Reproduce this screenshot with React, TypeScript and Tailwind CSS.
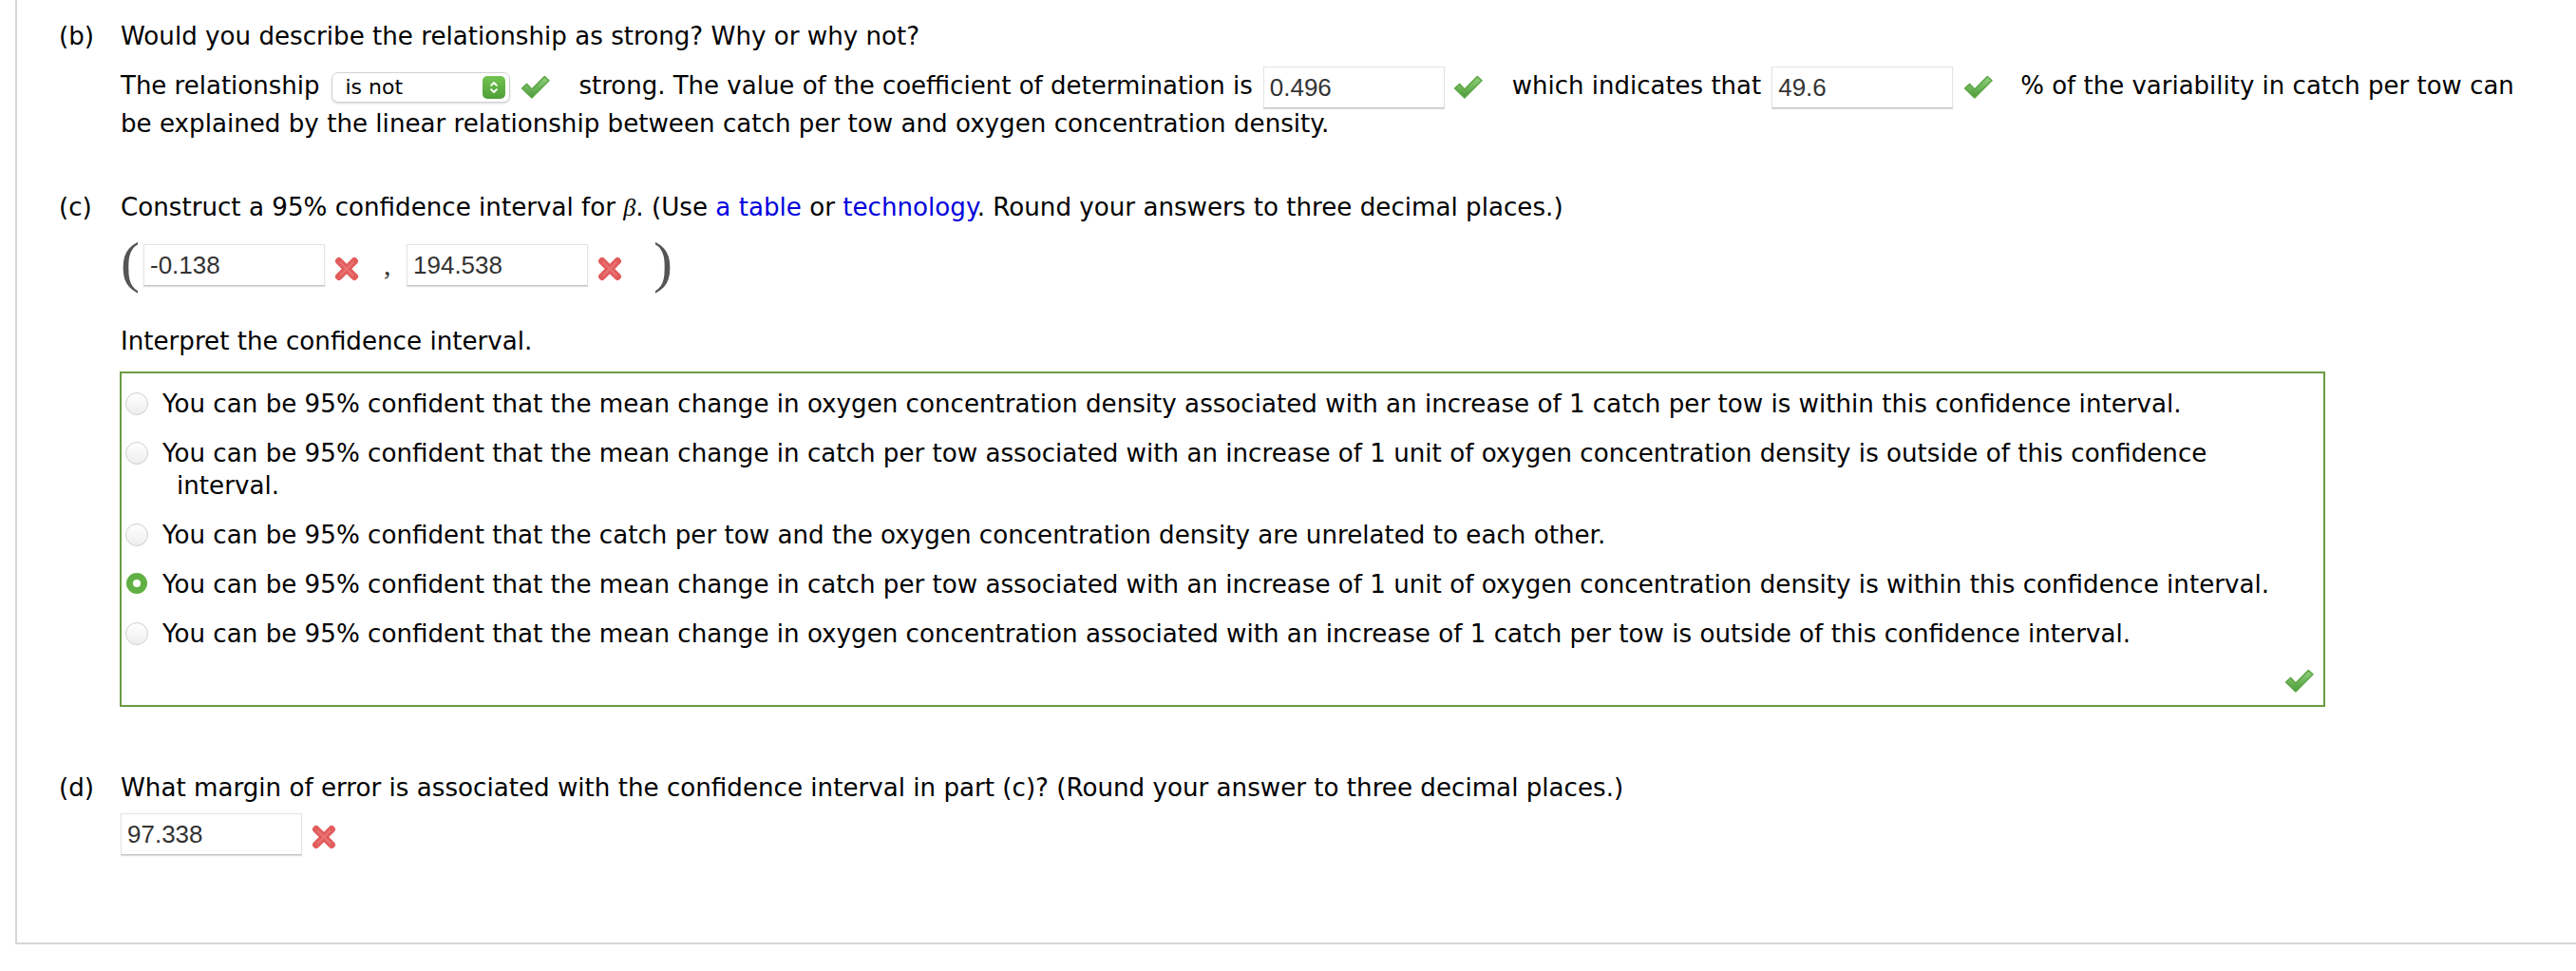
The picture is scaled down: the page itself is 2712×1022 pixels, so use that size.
import React from 'react';

function Check({ className = '' }: { className?: string }) {
  return (
    <svg viewBox="0 0 30 24" className={`inline-block w-[31px] h-[25px] align-middle ${className}`}>
      <defs>
        <linearGradient id="chk" x1="0" y1="0" x2="0" y2="1">
          <stop offset="0" stopColor="#93d27c" />
          <stop offset="1" stopColor="#4c9a3a" />
        </linearGradient>
      </defs>
      <polygon
        points="1.5,13.5 6.5,9 11.5,14.5 24.5,1.5 29,5.5 11.5,23"
        fill="url(#chk)"
        stroke="#5ea748"
        strokeWidth="1.5"
        strokeLinejoin="round"
      />
    </svg>
  );
}

function Cross({ className = '' }: { className?: string }) {
  return (
    <svg viewBox="0 0 24 24" className={`inline-block w-[26px] h-[26px] align-middle ${className}`}>
      <g stroke="#e25c5c" strokeWidth="7" strokeLinecap="round">
        <line x1="4.5" y1="4.5" x2="19.5" y2="19.5" />
        <line x1="19.5" y1="4.5" x2="4.5" y2="19.5" />
      </g>
      <g stroke="#ef8383" strokeWidth="2" strokeLinecap="round" opacity="0.6">
        <line x1="6" y1="6" x2="18" y2="18" />
        <line x1="18" y1="6" x2="6" y2="18" />
      </g>
    </svg>
  );
}

function Field({ value, className = '' }: { value: string; className?: string }) {
  return (
    <span
      className={`inline-flex items-center align-middle h-[44px] w-[191px] bg-white border border-[#e4e4e4] border-b-[#c4c4c4] shadow-[0_1px_1px_rgba(0,0,0,0.12)] pl-[6px] text-[26px] leading-none text-[#333] ${className}`}
      style={{ fontFamily: '"Liberation Sans", Arial, sans-serif' }}
    >
      {value}
    </span>
  );
}

function Radio({ checked }: { checked?: boolean }) {
  if (checked) {
    return (
      <span className="flex items-center justify-center w-[22px] h-[22px] ml-[1px] rounded-full bg-[#61b044]">
        <span className="w-[8px] h-[8px] rounded-full bg-white" />
      </span>
    );
  }
  return (
    <span className="block w-[24px] h-[24px] rounded-full border border-[#cfcfcf] bg-gradient-to-b from-white to-[#eeeeee]" />
  );
}

const choices: { text: React.ReactNode; checked?: boolean }[] = [
  {
    text: 'You can be 95% confident that the mean change in oxygen concentration density associated with an increase of 1 catch per tow is within this confidence interval.',
  },
  {
    text: (
      <>
        You can be 95% confident that the mean change in catch per tow associated with an increase of 1 unit of oxygen concentration density is outside of this confidence
        <br />
        interval.
      </>
    ),
  },
  { text: 'You can be 95% confident that the catch per tow and the oxygen concentration density are unrelated to each other.' },
  {
    text: 'You can be 95% confident that the mean change in catch per tow associated with an increase of 1 unit of oxygen concentration density is within this confidence interval.',
    checked: true,
  },
  {
    text: 'You can be 95% confident that the mean change in oxygen concentration associated with an increase of 1 catch per tow is outside of this confidence interval.',
  },
];

export default function App() {
  return (
    <div className="min-h-screen bg-white text-black" style={{ fontFamily: '"DejaVu Sans", Verdana, sans-serif' }}>
      <div className="ml-4 border-l-2 border-b-2 border-[#d6d6d6] pl-[44px] pt-[17px] pb-[92px] text-[26.15px]">
        {/* (b) */}
        <div className="grid grid-cols-[65px_1fr] leading-[42px]">
          <div>(b)</div>
          <div>
            <div>Would you describe the relationship as strong? Why or why not?</div>
            <div className="mt-[10px]">
              <div className="whitespace-nowrap h-[40px] text-[26px]">
                The relationship
                <span className="relative inline-flex items-center align-middle ml-[13px] h-[32px] w-[188px] rounded-[7px] border border-[#d2d2d2] bg-white shadow-[0_1px_2px_rgba(0,0,0,0.15)] pl-[13px] text-[22px] leading-none">
                  is not
                  <span className="absolute right-[4px] top-[3px] flex items-center justify-center w-[24px] h-[24px] rounded-[5px] bg-gradient-to-b from-[#72c451] to-[#4f9f37]">
                    <svg viewBox="0 0 24 24" className="w-[20px] h-[20px]">
                      <path d="M8.5 9.5 L12 6 L15.5 9.5 M8.5 14.5 L12 18 L15.5 14.5" fill="none" stroke="#fff" strokeWidth="2.2" strokeLinecap="round" strokeLinejoin="round" />
                    </svg>
                  </span>
                </span>
                <Check className="ml-[11px] mr-[30px]" />
                strong. The value of the coefficient of determination is
                <Field value="0.496" className="ml-[11px]" />
                <Check className="ml-[9px] mr-[31px]" />
                which indicates that
                <Field value="49.6" className="ml-[11px]" />
                <Check className="ml-[11px] mr-[29px]" />
                % of the variability in catch per tow can
              </div>
              <div>be explained by the linear relationship between catch per tow and oxygen concentration density.</div>
            </div>
          </div>
        </div>

        {/* (c) */}
        <div className="grid grid-cols-[65px_1fr] leading-[42px] mt-[46px]">
          <div>(c)</div>
          <div>
            <div>
              Construct a 95% confidence interval for{' '}
              <i style={{ fontFamily: '"Liberation Serif", serif' }}>β</i>. (Use{' '}
              <span className="text-[#0000dd]">a table</span> or{' '}
              <span className="text-[#0000dd]">technology</span>. Round your answers to three decimal places.)
            </div>
            <div className="flex items-center h-[56px] mt-[11px]">
              <span
                className="w-[24px] text-[60px] leading-none text-[#555] -mt-[6px]"
                style={{ fontFamily: '"Liberation Serif", serif' }}
              >
                (
              </span>
              <Field value="-0.138" />
              <Cross className="ml-[10px] mt-[8px]" />
              <span
                className="w-[50px] pl-[26px] text-[30px] leading-none text-[#333]"
                style={{ fontFamily: '"Liberation Serif", serif' }}
              >
                ,
              </span>
              <Field value="194.538" />
              <Cross className="ml-[10px] mt-[8px]" />
              <span
                className="ml-[33px] text-[60px] leading-none text-[#555] -mt-[6px]"
                style={{ fontFamily: '"Liberation Serif", serif' }}
              >
                )
              </span>
            </div>
            <div className="mt-[31px]">Interpret the confidence interval.</div>
            <div className="mt-[11px] -ml-[1px] w-[2322px] border-2 border-[#6a9c42] pl-[4px] pt-[15px] pr-[10px] pb-[13px]">
              <div className="flex flex-col gap-[18px]">
                {choices.map((c, i) => (
                  <div key={i} className="flex items-start leading-[34px]">
                    <div className="mt-[5px] w-[24px] shrink-0">
                      <Radio checked={c.checked} />
                    </div>
                    <div className="ml-[15px] pl-[15px] -indent-[15px] pr-[20px]">{c.text}</div>
                  </div>
                ))}
              </div>
              <div className="flex justify-end mt-[20px]">
                <Check />
              </div>
            </div>
          </div>
        </div>

        {/* (d) */}
        <div className="grid grid-cols-[65px_1fr] leading-[42px] mt-[64px]">
          <div>(d)</div>
          <div>
            <div>What margin of error is associated with the confidence interval in part (c)? (Round your answer to three decimal places.)</div>
            <div className="flex items-center mt-[6px]">
              <Field value="97.338" />
              <Cross className="ml-[10px] mt-[6px]" />
            </div>
          </div>
        </div>
      </div>
    </div>
  );
}
